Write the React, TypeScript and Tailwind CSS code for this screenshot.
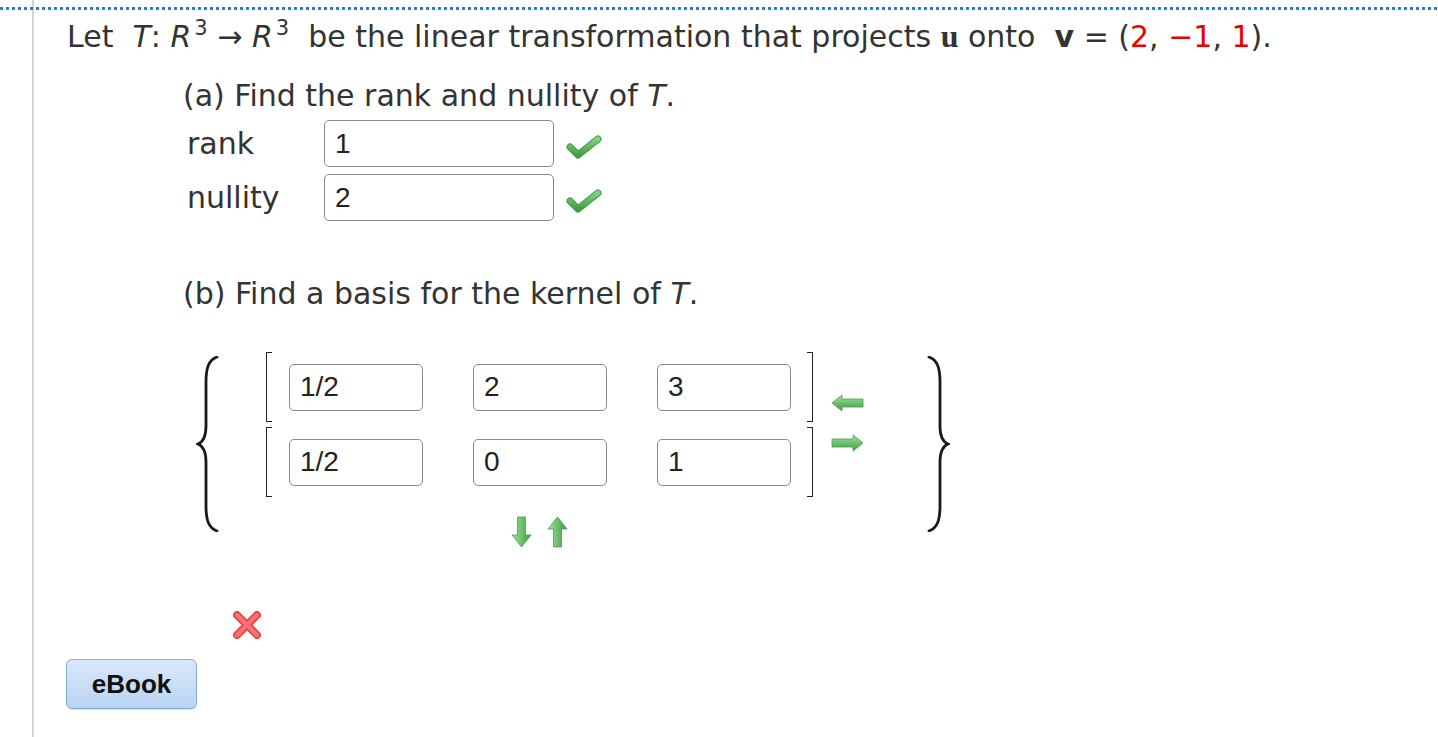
import React from "react";

const Check = () => (
  <svg width="36" height="24" viewBox="0 0 36 24" className="block">
    <defs>
      <linearGradient id="cg" x1="0" y1="0" x2="0" y2="1">
        <stop offset="0" stopColor="#7fd47f" />
        <stop offset="1" stopColor="#3f9f45" />
      </linearGradient>
    </defs>
    <path d="M4 12 L12 20 L32 4" fill="none" stroke="#3f9a45" strokeWidth="7" strokeLinecap="round" strokeLinejoin="round" />
    <path d="M4 12 L12 20 L32 4" fill="none" stroke="url(#cg)" strokeWidth="5" strokeLinecap="round" strokeLinejoin="round" />
  </svg>
);

const RedX = () => (
  <svg width="30" height="28" viewBox="0 0 30 28" className="block">
    <path d="M5 4 L25 24 M25 4 L5 24" fill="none" stroke="#e84a4a" strokeWidth="8" strokeLinecap="round" />
    <path d="M5 4 L25 24 M25 4 L5 24" fill="none" stroke="#f87373" strokeWidth="4" strokeLinecap="round" />
  </svg>
);

const HArrow = ({ dir }: { dir: "left" | "right" }) => (
  <svg width="33" height="18" viewBox="0 0 33 18" className="block">
    <defs>
      <linearGradient id={"ha" + dir} x1="0" y1="0" x2="0" y2="1">
        <stop offset="0" stopColor="#a8e0a8" />
        <stop offset="0.5" stopColor="#6cc16c" />
        <stop offset="1" stopColor="#3e9a42" />
      </linearGradient>
    </defs>
    <g transform={dir === "right" ? "translate(33 0) scale(-1 1)" : undefined}>
      <polygon
        points="1,9 11,1 11,5 32,5 32,13 11,13 11,17"
        fill={"url(#ha" + dir + ")"}
        stroke="#4a9c4e"
        strokeWidth="0.8"
        strokeLinejoin="round"
      />
    </g>
  </svg>
);

const VArrow = ({ dir }: { dir: "up" | "down" }) => (
  <svg width="21" height="32" viewBox="0 0 21 32" className="block">
    <defs>
      <linearGradient id={"va" + dir} x1="0" y1="0" x2="1" y2="0">
        <stop offset="0" stopColor="#a8e0a8" />
        <stop offset="0.5" stopColor="#6cc16c" />
        <stop offset="1" stopColor="#3e9a42" />
      </linearGradient>
    </defs>
    <g transform={dir === "up" ? "translate(0 32) scale(1 -1)" : undefined}>
      <polygon
        points="6.5,1 14.5,1 14.5,19 20,19 10.5,31 1,19 6.5,19"
        fill={"url(#va" + dir + ")"}
        stroke="#4a9c4e"
        strokeWidth="0.8"
        strokeLinejoin="round"
      />
    </g>
  </svg>
);

const Brace = ({ flip }: { flip?: boolean }) => (
  <svg width="24" height="176" viewBox="0 0 24 176" className="block">
    <g transform={flip ? "translate(24 0) scale(-1 1)" : undefined}>
      <path
        d="M21 1 C13 4 10 11 10 26 L10 70 C10 81 7 86 2 88 C7 90 10 95 10 106 L10 150 C10 165 13 172 21 175"
        fill="none"
        stroke="#1a1a1a"
        strokeWidth="2.8"
        strokeLinecap="round"
      />
    </g>
  </svg>
);

const Field = ({ value, w }: { value: string; w: string }) => (
  <div
    className={
      w +
      " h-[47px] rounded-[5px] border-[1.5px] border-[#8a8a8a] bg-white flex items-center pl-[10px] text-[28px] text-[#222] font-['Liberation_Sans',Arial,sans-serif]"
    }
  >
    {value}
  </div>
);

const VecRow = ({ vals }: { vals: string[] }) => (
  <div className="flex items-center h-[70px]">
    <div className="w-[6px] h-full border-l-[1.5px] border-y-[1.5px] border-[#222]" />
    <div className="ml-[17px] flex gap-[50px]">
      {vals.map((v, i) => (
        <Field key={i} value={v} w="w-[134px]" />
      ))}
    </div>
    <div className="ml-[16px] w-[6px] h-full border-r-[1.5px] border-y-[1.5px] border-[#222]" />
  </div>
);

const Sup = ({ children }: { children: React.ReactNode }) => (
  <span className="relative -top-[8px] ml-[3px] text-[21px] leading-none">{children}</span>
);

export default function App() {
  const sans = "font-['DejaVu_Sans',Verdana,sans-serif]";
  return (
    <div className={"min-h-[737px] w-[1438px] bg-white text-[#333] " + sans}>
      <div className="ml-[32px] border-l-2 border-[#d4d4d4] min-h-[737px] pt-[7px]">
        <div className="-ml-[34px] h-[3px] bg-[repeating-linear-gradient(90deg,#1a80d8_0_3px,transparent_3px_6px)]" />

        <div className="ml-[33px] mt-[6px] h-[40px] flex items-center text-[30px] whitespace-pre">
          <span>Let  </span>
          <span className="italic">T</span>
          <span>: </span>
          <span className="italic">R</span>
          <Sup>3</Sup>
          <span> → </span>
          <span className="italic">R</span>
          <Sup>3</Sup>
          <span>  be the linear transformation that projects </span>
          <span className="font-bold font-['Liberation_Serif',serif] text-[32px]">u</span>
          <span> onto  </span>
          <span className="font-bold">v</span>
          <span> = (</span>
          <span className="text-[#ee0000]">2</span>
          <span>, </span>
          <span className="text-[#ee0000]">−1</span>
          <span>, </span>
          <span className="text-[#ee0000]">1</span>
          <span>).</span>
        </div>

        <div className="ml-[149px] mt-[19px] h-[40px] flex items-center text-[30px] whitespace-pre">
          <span>(a) Find the rank and nullity of </span>
          <span className="italic">T</span>
          <span>.</span>
        </div>

        <div className="ml-[149px] mt-[5px] flex items-center h-[47px]">
          <div className="w-[141px] pl-[4px] text-[30px]">rank</div>
          <Field value="1" w="w-[230px]" />
          <div className="ml-[12px] mt-[6px]">
            <Check />
          </div>
        </div>
        <div className="ml-[149px] mt-[7px] flex items-center h-[47px]">
          <div className="w-[141px] pl-[4px] text-[30px]">nullity</div>
          <Field value="2" w="w-[230px]" />
          <div className="ml-[12px] mt-[6px]">
            <Check />
          </div>
        </div>

        <div className="ml-[149px] mt-[52px] h-[40px] flex items-center text-[30px] whitespace-pre">
          <span>(b) Find a basis for the kernel of </span>
          <span className="italic">T</span>
          <span>.</span>
        </div>

        <div className="ml-[162px] mt-[39px] flex items-start">
          <div className="mt-[4px]">
            <Brace />
          </div>
          <div className="ml-[46px] flex flex-col">
            <VecRow vals={["1/2", "2", "3"]} />
            <div className="mt-[5px]">
              <VecRow vals={["1/2", "0", "1"]} />
            </div>
            <div className="mt-[19px] flex justify-center gap-[15px]">
              <VArrow dir="down" />
              <VArrow dir="up" />
            </div>
          </div>
          <div className="ml-[18px] mt-[42px] flex flex-col gap-[22px]">
            <HArrow dir="left" />
            <HArrow dir="right" />
          </div>
          <div className="ml-[62px] mt-[4px]">
            <Brace flip />
          </div>
        </div>

        <div className="ml-[198px] mt-[63px]">
          <RedX />
        </div>

        <div className="ml-[32px] mt-[20px]">
          <button className="w-[131px] h-[50px] rounded-[6px] border-[1.5px] border-[#86acdb] bg-gradient-to-b from-[#d9e8fa] to-[#b9d4f3] text-[26px] font-bold text-[#111] font-['Liberation_Sans',Arial,sans-serif] shadow-[0_1px_1px_rgba(0,0,0,0.15)]">
            eBook
          </button>
        </div>
      </div>
    </div>
  );
}
